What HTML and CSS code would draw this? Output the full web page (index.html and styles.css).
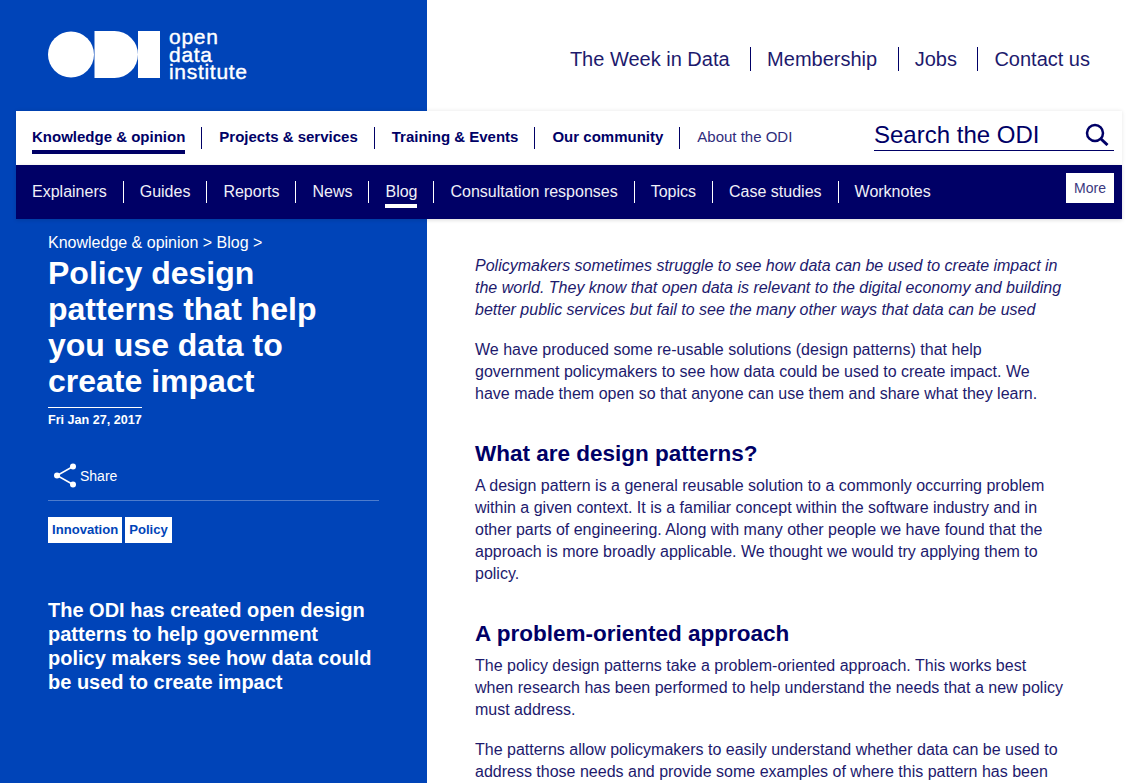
FILE: index.html
```html
<!DOCTYPE html>
<html lang="en">
<head>
    <meta charset="UTF-8">
    <meta name="viewport" content="width=device-width, initial-scale=1.0">
    <title>Policy design patterns that help you use data to create impact</title>
    <link rel="stylesheet" href="styles.css">
</head>
<body>
    <!-- Top header -->
    <header class="site-header">
        <div class="logo">
            <svg class="logo-mark" width="112" height="47" viewBox="0 0 112 47" aria-hidden="true">
                <circle cx="23" cy="23.5" r="23" fill="#fff"/>
                <path d="M46.500 0H66.500a23.500 23.500 0 0 1 0 47H46.500z" fill="#fff"/>
                <rect x="90" y="0" width="22" height="47" fill="#fff"/>
            </svg>
            <div class="logo-text">open<br>data<br>institute</div>
        </div>
        <nav class="top-links">
            <a href="#">The Week in Data</a>
            <a href="#">Membership</a>
            <a href="#">Jobs</a>
            <a href="#">Contact us</a>
        </nav>
    </header>

    <!-- Main nav -->
    <div class="main-nav">
        <nav class="main-links">
            <a href="#" class="active"><span>Knowledge &amp; opinion</span></a>
            <a href="#"><span>Projects &amp; services</span></a>
            <a href="#"><span>Training &amp; Events</span></a>
            <a href="#"><span>Our community</span></a>
            <a href="#" class="light"><span>About the ODI</span></a>
        </nav>
        <div class="search">
            <span>Search the ODI</span>
            <svg width="26" height="27" viewBox="0 0 26 27" aria-hidden="true">
                <circle cx="10" cy="14" r="8" fill="none" stroke="#000066" stroke-width="2.500"/>
                <path d="M15.500 19.500l7 6.500" fill="none" stroke="#000066" stroke-width="3"/>
            </svg>
        </div>
    </div>

    <!-- Sub nav -->
    <div class="sub-nav">
        <nav class="sub-links">
            <a href="#"><span>Explainers</span></a>
            <a href="#"><span>Guides</span></a>
            <a href="#"><span>Reports</span></a>
            <a href="#"><span>News</span></a>
            <a href="#" class="active"><span>Blog</span></a>
            <a href="#"><span>Consultation responses</span></a>
            <a href="#"><span>Topics</span></a>
            <a href="#"><span>Case studies</span></a>
            <a href="#"><span>Worknotes</span></a>
        </nav>
        <button class="more">More</button>
    </div>

    <!-- Page content -->
    <div class="content">
        <aside class="side">
            <div class="crumbs">Knowledge &amp; opinion &gt; Blog &gt;</div>
            <h1>Policy design patterns that help you use data to create impact</h1>
            <div class="date">Fri Jan 27, 2017</div>
            <div class="share">
                <svg width="26" height="26" viewBox="0 0 26 26" aria-hidden="true">
                    <path d="M21 4.500L5 13.500L21 22.500" fill="none" stroke="#fff" stroke-width="1.500"/>
                    <circle cx="21" cy="4.500" r="3" fill="#fff"/>
                    <circle cx="5" cy="13.500" r="3" fill="#fff"/>
                    <circle cx="21" cy="22.500" r="3" fill="#fff"/>
                </svg>
                <span>Share</span>
            </div>
            <div class="tags">
                <a href="#">Innovation</a>
                <a href="#">Policy</a>
            </div>
            <p class="summary">The ODI has created open design patterns to help government policy makers see how data could be used to create impact</p>
        </aside>
        <main class="article">
            <p class="intro">Policymakers sometimes struggle to see how data can be used to create impact in the world. They know that open data is relevant to the digital economy and building better public services but fail to see the many other ways that data can be used</p>
            <p>We have produced some re-usable solutions (design patterns) that help government policymakers to see how data could be used to create impact. We have made them open so that anyone can use them and share what they learn.</p>
            <h2>What are design patterns?</h2>
            <p>A design pattern is a general reusable solution to a commonly occurring problem within a given context. It is a familiar concept within the software industry and in other parts of engineering. Along with many other people we have found that the approach is more broadly applicable. We thought we would try applying them to policy.</p>
            <h2>A problem-oriented approach</h2>
            <p>The policy design patterns take a problem-oriented approach. This works best when research has been performed to help understand the needs that a new policy must address.</p>
            <p>The patterns allow policymakers to easily understand whether data can be used to address those needs and provide some examples of where this pattern has been</p>
        </main>
    </div>
</body>
</html>
```

FILE: styles.css
```css
/* Reset and base styles */
* {
    margin: 0;
    padding: 0;
    box-sizing: border-box;
}

html,
body {
    height: 783px;
    overflow: hidden;
}

body {
    font-family: "Liberation Sans", Arial, sans-serif;
    color: #1d1a6d;
    background: linear-gradient(to right, #0044b8 427px, #fff 427px);
}

a {
    color: inherit;
    text-decoration: none;
}

/* Top header */
.site-header {
    height: 111px;
    display: flex;
}

.logo {
    width: 427px;
    padding: 31px 0 0 48px;
    display: flex;
    align-items: flex-start;
}

.logo-text {
    margin: -3px 0 0 9px;
    color: #fff;
    font-size: 21px;
    line-height: 17.500px;
    letter-spacing: 0.700px;
    -webkit-text-stroke: 0.400px #fff;
}

.top-links {
    flex: 1;
    display: flex;
    justify-content: flex-end;
    align-items: flex-start;
    padding: 47px 48px 0 0;
}

.top-links a {
    font-size: 20px;
    line-height: 24px;
    padding: 0 20.500px 0 16px;
    border-right: 1px solid #000066;
    color: #1d1a6d;
}

.top-links a:last-child {
    border-right: none;
    padding-right: 0;
}

/* Main nav */
.main-nav {
    margin: 0 16px;
    height: 54px;
    background: #fff;
    display: flex;
    justify-content: space-between;
    box-shadow: 0 0 4px rgba(0, 0, 0, 0.1);
    position: relative;
}

.main-links {
    display: flex;
    padding: 16px 0 0 16px;
    align-items: flex-start;
}

.main-links a {
    height: 22px;
    padding: 0 16px 0 17px;
    border-right: 1px solid #000066;
    font-size: 15px;
    font-weight: 700;
    color: #000066;
}

.main-links a:first-child,
.sub-links a:first-child {
    padding-left: 0;
}

.main-links a:last-child,
.sub-links a:last-child {
    border-right: none;
}

.main-links a span {
    display: inline-block;
    line-height: 20px;
    padding-bottom: 3px;
}

.sub-links a span {
    display: inline-block;
    line-height: 21px;
    padding-bottom: 2px;
}

.main-links a.active span {
    border-bottom: 4px solid #000066;
}

.main-links a.light {
    font-weight: 400;
    color: #2f2c7c;
}

.search {
    width: 240px;
    height: 40px;
    margin: 0 8px 0 0;
    padding: 8px 3px 0 0;
    border-bottom: 1px solid #000066;
    display: flex;
    justify-content: space-between;
    align-items: flex-start;
    font-size: 24px;
    line-height: 32px;
    color: #000066;
}

/* Sub nav */
.sub-nav {
    margin: 0 16px;
    height: 54px;
    background: #000066;
    display: flex;
    justify-content: space-between;
    box-shadow: 0 1px 4px rgba(0, 0, 0, 0.15);
    position: relative;
}

.sub-links {
    display: flex;
    padding: 16px 0 0 16px;
    align-items: flex-start;
}

.sub-links a {
    height: 22px;
    padding: 0 16px;
    border-right: 1px solid #fff;
    font-size: 16px;
    color: #f0f0f8;
}

.sub-links a.active span {
    border-bottom: 4px solid #fff;
}

.more {
    width: 48px;
    height: 30px;
    margin: 8px 8px 0 0;
    border: none;
    background: #fff;
    font-family: inherit;
    font-size: 14px;
    color: #3a3880;
}

/* Page content */
.content {
    display: grid;
    grid-template-columns: 427px 1fr;
}

.side {
    padding: 14px 48px 0;
    color: #fff;
}

.crumbs {
    font-size: 16px;
    line-height: 19px;
}

h1 {
    margin-top: 3px;
    font-size: 32px;
    line-height: 36px;
    font-weight: 700;
}

.date {
    display: inline-block;
    margin-top: 8px;
    padding-top: 4px;
    border-top: 1px solid #fff;
    font-size: 12.600px;
    line-height: 17px;
    font-weight: 700;
}

.share {
    margin-top: 33px;
    padding: 0 0 10px 4px;
    height: 39px;
    display: flex;
    align-items: flex-start;
    gap: 2px;
    font-size: 14px;
    line-height: 28px;
    border-bottom: 1px solid rgba(255, 255, 255, 0.3);
}

.tags {
    margin-top: 16px;
    display: flex;
    gap: 3px;
}

.tags a {
    height: 26px;
    padding: 0 4px;
    background: #fff;
    color: #0044b8;
    font-size: 13.100px;
    line-height: 26px;
    font-weight: 700;
}

.summary {
    margin-top: 55px;
    font-size: 20px;
    line-height: 24px;
    font-weight: 700;
}

.article {
    padding: 36px 73px 0 48px;
    font-size: 16px;
    line-height: 22px;
}

.article p {
    margin-bottom: 18px;
}

.article p.intro {
    font-style: italic;
}

.article p:last-child {
    margin-bottom: 0;
}

h2 {
    margin: 35px 0 7px;
    font-size: 22.500px;
    line-height: 28px;
    font-weight: 700;
    color: #000066;
}
```
